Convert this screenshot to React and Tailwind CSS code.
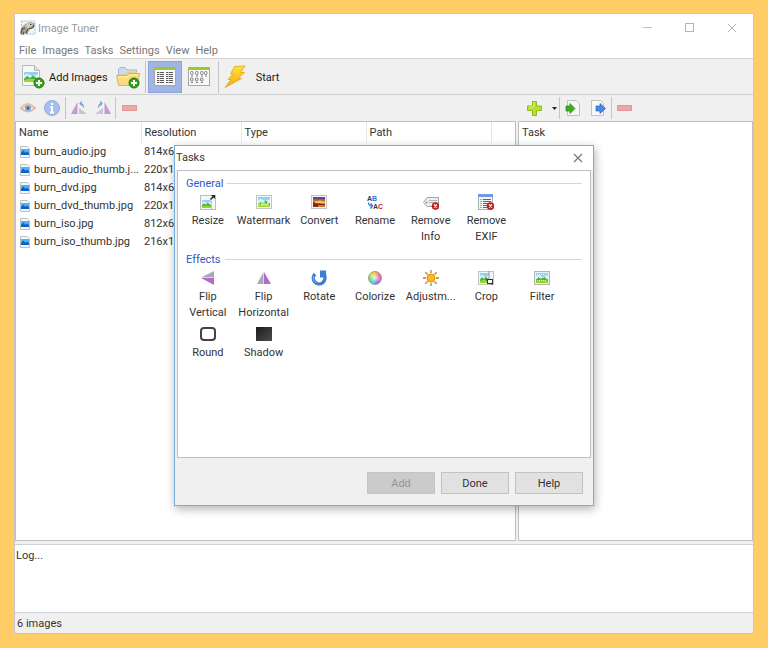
import { useState } from "react";

const files = [
  { name: "burn_audio.jpg", res: "814x61" },
  { name: "burn_audio_thumb.j...", res: "220x16" },
  { name: "burn_dvd.jpg", res: "814x61" },
  { name: "burn_dvd_thumb.jpg", res: "220x16" },
  { name: "burn_iso.jpg", res: "812x62" },
  { name: "burn_iso_thumb.jpg", res: "216x16" },
];

const groups = [
  {
    title: "General",
    items: [
      { label: "Resize", Icon: ResizeIcon },
      { label: "Watermark", Icon: WatermarkIcon },
      { label: "Convert", Icon: ConvertIcon },
      { label: "Rename", Icon: RenameIcon },
      { label: "Remove Info", Icon: RemoveInfoIcon },
      { label: "Remove EXIF", Icon: RemoveExifIcon },
    ],
  },
  {
    title: "Effects",
    items: [
      { label: "Flip Vertical", Icon: FlipVerticalIcon },
      { label: "Flip Horizontal", Icon: FlipHorizontalIcon },
      { label: "Rotate", Icon: RotateIcon },
      { label: "Colorize", Icon: ColorizeIcon },
      { label: "Adjustm...", Icon: SunIcon },
      { label: "Crop", Icon: CropIcon },
      { label: "Filter", Icon: FilterIcon },
      { label: "Round", Icon: RoundIcon },
      { label: "Shadow", Icon: ShadowIcon },
    ],
  },
];

function Svg({ size = 16, children }) {
  return (
    <svg width={size} height={size} viewBox={`0 0 ${size} ${size}`} fill="none" className="block shrink-0">
      {children}
    </svg>
  );
}

/* ---------- shared icon parts ---------- */

function Landscape({ x, y, w, h }) {
  return (
    <svg x={x} y={y} width={w} height={h} viewBox="0 0 14 10" preserveAspectRatio="none">
      <rect width="14" height="10" fill="#8ed3f0" />
      <path d="M0 3Q3 1 6 3T14 2V6H0z" fill="#d5f2fb" />
      <path d="M0 7L3 4L6 6L9 3.500L14 7V10H0z" fill="#4fab3a" />
      <path d="M0 8Q7 5.500 14 8V10H0z" fill="#9bd430" />
    </svg>
  );
}

function PlusBadge({ cx, cy, r = 5 }) {
  return (
    <g>
      <circle cx={cx} cy={cy} r={r} fill="#36a11d" stroke="#1d7a12" />
      <path d={`M${cx - 3} ${cy}H${cx + 3}M${cx} ${cy - 3}V${cy + 3}`} stroke="#fff" strokeWidth="2" />
    </g>
  );
}

function CrossBadge() {
  return (
    <g>
      <circle cx="12.500" cy="12" r="3.500" fill="#c81e1e" stroke="#a31414" strokeWidth=".6" />
      <path d="M11 10.500L14 13.500M14 10.500L11 13.500" stroke="#fff" strokeWidth="1.200" />
    </g>
  );
}

/* ---------- main toolbar ---------- */

function AppIcon() {
  return (
    <Svg>
      <rect x="1.500" y="1" width="13.500" height="13" fill="#f0f7fc" stroke="#8cc3e6" strokeDasharray="2 1" />
      <path d="M0 13L1 8L4 5L7 3L10 2L14 3L15 5L13 8L10 9L8 12L8 14H5L5 12L3 15H1z" fill="#aaa292" />
      <path d="M5 6L8 3L13 3.500L12 6L8 8z" fill="#d3cdc0" />
      <path d="M1 13L2.500 9L5 8M8 9L6 13M9 9L13 7.500L14 5M3 14.500L4 12" stroke="#514b43" strokeWidth="1.100" />
      <path d="M10 4.500H11.500" stroke="#3a3530" />
    </Svg>
  );
}

function AddImageIcon() {
  return (
    <Svg size={24}>
      <path d="M.5 .5H12.500L17.500 5.500V20.500H.5z" fill="#f8f8f8" stroke="#b9b9b9" />
      <path d="M12.500 .5V5.500H17.500" fill="#ddd" stroke="#b9b9b9" />
      <Landscape x={2} y={7} w={14} h={10} />
      <PlusBadge cx={17} cy={18} />
    </Svg>
  );
}

function AddFolderIcon() {
  return (
    <Svg size={24}>
      <path d="M2.500 4.500L4 2.500H9L11 5H20.500V18H2.500z" fill="#c6dcf2" stroke="#9dbbd9" />
      <path d="M3 9H10L12 7H21V20H3z" fill="#eecb78" />
      <path d="M.5 10.500H11L13 8.500H23.500L21.500 20.500H2.500z" fill="#fbd97d" stroke="#dfb45c" />
      <path d="M2 12H12L14 10H22" stroke="#fff0b8" />
      <PlusBadge cx={18} cy={18} />
    </Svg>
  );
}

function DetailsIcon() {
  return (
    <Svg size={22}>
      <rect x=".5" y="2.500" width="21" height="17" fill="#fafafa" stroke="#a6a6a6" />
      <rect x="0" y="1" width="22" height="3" fill="#97cc2c" />
      <path d="M3 6.500H10M3 8.500H10M3 10.500H10M3 12.500H10M3 14.500H10M3 16.500H10M12 6.500H19M12 8.500H19M12 10.500H19M12 12.500H19M12 14.500H19M12 16.500H19" stroke="#585858" strokeWidth="1.200" />
      <path d="M5.500 5V18M14.500 5V18" stroke="#fafafa" strokeWidth=".6" />
    </Svg>
  );
}

function ThumbsIcon() {
  return (
    <Svg size={22}>
      <rect x=".5" y="2.500" width="21" height="17" fill="#fafafa" stroke="#a6a6a6" />
      <rect x="0" y="1" width="22" height="3" fill="#97cc2c" />
      {[4, 9, 14, 18].map((x) => (
        <g key={x} stroke="#7a7a7a">
          <rect x={x - 1.5} y="5.500" width="2.500" height="3" rx="1" />
          <path d={`M${x - 1} 10H${x + 1}`} />
        </g>
      ))}
      {[4, 9, 14].map((x) => (
        <g key={x} stroke="#7a7a7a">
          <rect x={x - 1.5} y="12" width="2.500" height="3" rx="1" />
          <path d={`M${x - 1} 16.500H${x + 1}`} />
        </g>
      ))}
    </Svg>
  );
}

function BoltIcon() {
  return (
    <Svg size={24}>
      <defs>
        <linearGradient id="bolt" x1="0" y1="0" x2="0" y2="1">
          <stop offset="0" stopColor="#ffe23a" />
          <stop offset="1" stopColor="#f9a80c" />
        </linearGradient>
      </defs>
      <path
        d="M10.500 1.500L21 1L16.500 7.500H20.500L14 13.500H17.500L1 22.500L7 14.500H4L9 9H6.500z"
        fill="url(#bolt)"
        stroke="#dfa52a"
        strokeWidth=".8"
        strokeLinejoin="round"
      />
    </Svg>
  );
}

/* ---------- small toolbars ---------- */

function EyeIcon() {
  return (
    <Svg>
      <path d="M0 8Q7 -1 16 8Q8 16 0 8z" fill="#f1d3bd" stroke="#d9b498" strokeWidth=".8" />
      <path d="M1.500 8.500Q8 4 14.500 8.500Q8 13 1.500 8.500z" fill="#fff" stroke="#b79a88" strokeWidth=".7" />
      <circle cx="8" cy="8" r="3.200" fill="#8fb0d6" />
      <circle cx="8" cy="8" r="1.500" fill="#4d5f7a" />
    </Svg>
  );
}

function InfoIcon() {
  return (
    <Svg>
      <circle cx="8" cy="8" r="7.500" fill="#a5c0ec" stroke="#8facdf" />
      <path d="M8 3V5M6.500 7H8V12M6 12.500H10" stroke="#fff" strokeWidth="2" />
    </Svg>
  );
}

function RotateLeftIcon() {
  return (
    <Svg>
      <path d="M6.500 2V14H0z" fill="#c698d6" />
      <path d="M8 8L16 14H8z" fill="#c6c6cc" />
      <path d="M12.500 7.500Q12.500 3.500 9 3.500M11 1.500L9 3.500L11 5.500" stroke="#7f9fcf" strokeWidth="1.200" />
    </Svg>
  );
}

function RotateRightIcon() {
  return (
    <Svg>
      <path d="M9.500 2V14H16z" fill="#c698d6" />
      <path d="M8 8L0 14H8z" fill="#c6c6cc" />
      <path d="M3.500 7.500Q3.500 3.500 7 3.500M5 1.500L7 3.500L5 5.500" stroke="#7f9fcf" strokeWidth="1.200" />
    </Svg>
  );
}

function MinusIcon() {
  return (
    <Svg>
      <rect x=".5" y="5.500" width="14" height="5" fill="#e9a8a4" stroke="#df9b97" />
    </Svg>
  );
}

function PlusIcon() {
  return (
    <Svg>
      <path d="M5.500 1.500H9.500V6H14.500V10.500H9.500V15.500H5.500V10.500H.5V6H5.500z" fill="#b9e02a" stroke="#8fba2c" />
      <path d="M6.500 3V7H2" stroke="#dcf37f" />
    </Svg>
  );
}

function ImportIcon() {
  return (
    <Svg>
      <path d="M2.500 .5H11.500L14.500 3.500V15.500H2.500z" fill="#f7f7f7" stroke="#c2c2c2" />
      <path d="M1 6H5V3.500L10 8.500L5 13.500V11H1z" fill="#43ad1f" stroke="#2b8512" strokeWidth=".7" />
    </Svg>
  );
}

function ExportIcon() {
  return (
    <Svg>
      <path d="M1.500 .5H10.500L13.500 3.500V15.500H1.500z" fill="#f7f7f7" stroke="#c2c2c2" />
      <path d="M6 6H10V3.500L15.500 8.500L10 13.500V11H6z" fill="#4c86ea" stroke="#2c5fc4" strokeWidth=".7" />
    </Svg>
  );
}

function FileIcon() {
  return (
    <Svg size={12}>
      <path d="M1.500 .5H8.500L10.500 2.500V11.500H1.500z" fill="#f4f8fc" stroke="#b4c0cc" />
      <rect x="2" y="3" width="8" height="6" fill="#55b0f0" />
      <path d="M2 9V7L4.500 4.500L6.500 7L8 5.500L10 7.500V9z" fill="#0a63c2" />
    </Svg>
  );
}

/* ---------- task icons ---------- */

function ResizeIcon() {
  return (
    <Svg>
      <rect x=".5" y="1.500" width="15" height="14" fill="#f5f5f5" stroke="#bdbdbd" />
      <Landscape x={2} y={6} w={9} h={8} />
      <path d="M11.500 7V15" stroke="#c8c8c8" />
      <path d="M10.500 5.500L13.500 2.500" stroke="#222" strokeWidth="1.500" />
      <path d="M11 1H15V5z" fill="#222" />
    </Svg>
  );
}

function WatermarkIcon() {
  return (
    <Svg>
      <rect x=".5" y="1.500" width="15" height="13" fill="#f5f5f5" stroke="#c4c4c4" />
      <Landscape x={2} y={3} w={12} h={10} />
      <path d="M3 12V9L5 7L6 12M7 12V9H9V12M10 12L12 8V12" stroke="#e6f79b" />
    </Svg>
  );
}

function ConvertIcon() {
  return (
    <Svg>
      <rect x=".5" y="1.500" width="15" height="13" fill="#f5f5f5" stroke="#c4c4c4" />
      <rect x="2" y="3" width="12" height="10" fill="#e2752b" />
      <rect x="2" y="3" width="12" height="2" fill="#4b5488" />
      <path d="M2 5H14V6.500H2z" fill="#b4534a" />
      <path d="M4 7.500L9 6.500L14 8V9.500H4z" fill="#fbc34e" />
      <path d="M2 8L4 9L14 10V11H8V13H2z" fill="#7a2f1a" />
      <path d="M7 11H14V13H7z" fill="#d9702a" />
    </Svg>
  );
}

function RenameIcon() {
  return (
    <Svg>
      <g fontFamily="Liberation Sans, sans-serif" fontSize="7" fontWeight="bold">
        <text x="0" y="7" fill="#2a3a5c">A</text>
        <text x="5" y="7" fill="#2f72d0">B</text>
        <text x="6" y="15" fill="#2a3a5c">A</text>
        <text x="11" y="15" fill="#d02525">C</text>
      </g>
      <path d="M1.500 8.500Q1.500 12 5 12M3.500 9.500L5.500 12L3.500 14.500" stroke="#3c7bcf" strokeWidth="1.300" />
    </Svg>
  );
}

function RemoveInfoIcon() {
  return (
    <Svg>
      <path d="M.5 8.500L4 3.500H15.500V12.500H4z" fill="#eee" stroke="#a5a5a5" />
      <path d="M6 6.500H14M6 8.500H11" stroke="#b5b5b5" />
      <circle cx="3.500" cy="8.500" r="1" fill="#888" />
      <CrossBadge />
    </Svg>
  );
}

function RemoveExifIcon() {
  return (
    <Svg>
      <rect x=".5" y="1.500" width="14" height="14" fill="#f5f5f5" stroke="#a9adb5" />
      <rect x="0" y="0" width="15" height="3" fill="#7398e2" />
      <path d="M5 5.500H13M5 7.500H13M5 9.500H13M5 11.500H13M5 13.500H10" stroke="#666" />
      <path d="M2 5.500H4M2 7.500H4M2 9.500H4M2 11.500H4M2 13.500H4" stroke="#aaa" />
      <CrossBadge />
    </Svg>
  );
}

function FlipVerticalIcon() {
  return (
    <Svg>
      <path d="M1 7.500L14 1V7.500z" fill="#a9aab5" />
      <path d="M1 8L14 15V8z" fill="#b568cf" />
    </Svg>
  );
}

function FlipHorizontalIcon() {
  return (
    <Svg>
      <path d="M7.500 2L1 14H7.500z" fill="#a9aab5" />
      <path d="M8 2L15 14H8z" fill="#b568cf" />
    </Svg>
  );
}

function RotateIcon() {
  return (
    <Svg>
      <path d="M4 4A5.800 5.800 0 1 0 13 5" stroke="#3f7cd6" strokeWidth="3.400" />
      <path d="M9 .5H15V3L15.500 7.500H9z" fill="#3f7cd6" />
      <path d="M2.500 6A6 6 0 0 0 5 13" stroke="#7fb0ef" />
    </Svg>
  );
}

function ColorizeIcon() {
  return (
    <span className="block size-4 p-px">
      <span className="block size-full rounded-full border border-[#9a9a9a] bg-[radial-gradient(circle,#ffffffcc_0%,#ffffff00_65%),conic-gradient(#f6c04a,#f36a6a,#e45bd8,#6a7bf2,#4fc8e8,#5fdc6a,#c9e84a,#f6c04a)]" />
    </span>
  );
}

function SunIcon() {
  return (
    <Svg>
      <path
        d="M8 0V3M8 13V16M0 8H3M13 8H16M2.300 2.300L4.500 4.500M11.500 11.500L13.700 13.700M2.300 13.700L4.500 11.500M11.500 4.500L13.700 2.300"
        stroke="#b8842a"
        strokeWidth="1.300"
      />
      <circle cx="8" cy="8" r="4" fill="#fdbb1f" stroke="#e08e0b" />
    </Svg>
  );
}

function CropIcon() {
  return (
    <Svg>
      <rect x=".5" y="1.500" width="15" height="13" fill="#f5f5f5" stroke="#c4c4c4" />
      <Landscape x={2} y={3} w={9} h={10} />
      <path d="M11 1V9" stroke="#999" />
      <rect x="9.500" y="9.500" width="5" height="4" fill="#fff" stroke="#333" />
      <path d="M8 10H10M14 13V15" stroke="#333" />
    </Svg>
  );
}

function FilterIcon() {
  return (
    <Svg>
      <rect x=".5" y="1.500" width="15" height="13" fill="#eee" stroke="#b4b4b4" />
      <Landscape x={2} y={3} w={12} h={10} />
      <path d="M3 4.500H13M3 7.500H13M3 10.500H13" stroke="#fff" strokeOpacity=".7" strokeDasharray="1 1" />
    </Svg>
  );
}

function RoundIcon() {
  return (
    <Svg>
      <rect x="1" y="2" width="14" height="12" rx="3" fill="#fff" stroke="#444" strokeWidth="2" />
    </Svg>
  );
}

function ShadowIcon() {
  return (
    <Svg>
      <defs>
        <linearGradient id="shadow" x1="0" y1="0" x2="1" y2="1">
          <stop offset="0" stopColor="#1c1c1c" />
          <stop offset="1" stopColor="#4c4c4c" />
        </linearGradient>
      </defs>
      <rect x="0" y="1" width="16" height="14" fill="url(#shadow)" />
    </Svg>
  );
}

/* ---------- layout ---------- */

function Separator() {
  return <span className="w-px self-stretch bg-[#c4c4c4]" />;
}

function IconButton({ label, children }) {
  return (
    <button type="button" aria-label={label} className="shrink-0">
      {children}
    </button>
  );
}

function TitleBar() {
  return (
    <header className="flex h-7 items-center bg-white pr-4 pl-[5px] text-[#9a9a9a]">
      <AppIcon />
      <h1 className="ml-0.5 flex-1 pt-0.5">Image Tuner</h1>
      <div className="flex gap-8">
        <IconButton label="Minimize">
          <Svg size={10}><path d="M0 4.500H9" stroke="#c0c0c0" /></Svg>
        </IconButton>
        <IconButton label="Maximize">
          <Svg size={10}><rect x=".5" y=".5" width="8" height="8" stroke="#b5b5b5" /></Svg>
        </IconButton>
        <IconButton label="Close">
          <Svg size={10}><path d="M1 1L9 9M9 1L1 9" stroke="#b5b5b5" /></Svg>
        </IconButton>
      </div>
    </header>
  );
}

function MenuBar() {
  return (
    <nav className="flex h-[17px] items-center gap-1.5 border-b border-[#d4d4d4] bg-white pt-px pl-1 text-[#777]">
      {["File", "Images", "Tasks", "Settings", "View", "Help"].map((m) => (
        <button key={m} type="button">{m}</button>
      ))}
    </nav>
  );
}

function Toolbar() {
  const [view, setView] = useState("details");
  const viewClass = (v) =>
    `flex w-[34px] items-center justify-center self-stretch border ${
      view === v ? "border-[#8ba5dc] bg-[#9fb4e3]" : "border-transparent"
    }`;

  return (
    <div className="flex h-9 items-center border-b border-[#cfcfcf] pt-0.5 pb-px pl-[7px]">
      <button type="button" className="flex items-center gap-[3px] text-[#1a1a1a]">
        <AddImageIcon />
        <span className="pt-px">Add Images</span>
      </button>
      <div className="ml-2 flex items-center gap-[5px] self-stretch">
        <IconButton label="Add folder"><AddFolderIcon /></IconButton>
        <Separator />
      </div>
      <div className="mx-0.5 flex self-stretch">
        <button type="button" aria-label="Details view" onClick={() => setView("details")} className={viewClass("details")}>
          <DetailsIcon />
        </button>
        <button type="button" aria-label="Thumbnail view" onClick={() => setView("thumbs")} className={viewClass("thumbs")}>
          <ThumbsIcon />
        </button>
      </div>
      <Separator />
      <button type="button" className="ml-[5px] flex items-center gap-2 text-[#1a1a1a]">
        <BoltIcon />
        <span className="pt-px">Start</span>
      </button>
    </div>
  );
}

function FileToolbar() {
  return (
    <div className="flex items-center gap-2 py-0.5 pl-[5px]">
      <IconButton label="Preview"><EyeIcon /></IconButton>
      <div className="flex items-center gap-[5px] self-stretch">
        <IconButton label="Image info"><InfoIcon /></IconButton>
        <Separator />
        <IconButton label="Rotate left"><RotateLeftIcon /></IconButton>
      </div>
      <IconButton label="Rotate right"><RotateRightIcon /></IconButton>
      <div className="-ml-1 flex items-center gap-1.5 self-stretch">
        <Separator />
        <IconButton label="Remove image"><MinusIcon /></IconButton>
      </div>
    </div>
  );
}

function TaskToolbar() {
  return (
    <div className="flex items-center gap-[5px] py-0.5 pl-[9px]">
      <IconButton label="Add task"><PlusIcon /></IconButton>
      <div className="ml-1 flex items-center gap-0.5 self-stretch">
        <IconButton label="More tasks">
          <Svg size={5}><path d="M0 1H5L2.500 4z" fill="#222" /></Svg>
        </IconButton>
        <Separator />
      </div>
      <IconButton label="Load tasks"><ImportIcon /></IconButton>
      <div className="ml-1 flex items-center gap-[5px] self-stretch">
        <IconButton label="Save tasks"><ExportIcon /></IconButton>
        <Separator />
        <IconButton label="Remove task"><MinusIcon /></IconButton>
      </div>
    </div>
  );
}

function FileTable() {
  return (
    <table className="w-full table-fixed text-left">
      <thead>
        <tr className="h-[21px]">
          <th className="w-[125px] border-r border-[#e6e6e6] pl-[3px] font-normal">Name</th>
          <th className="w-[100px] border-r border-[#e6e6e6] pl-[3px] font-normal">Resolution</th>
          <th className="w-[125px] border-r border-[#e6e6e6] pl-[3px] font-normal">Type</th>
          <th className="w-[125px] border-r border-[#e6e6e6] pl-[3px] font-normal">Path</th>
          <th />
        </tr>
      </thead>
      <tbody>
        {files.map((f) => (
          <tr key={f.name} className="h-[18px]">
            <td className="pl-[3px]">
              <div className="flex items-center gap-[3px] whitespace-nowrap">
                <FileIcon />
                {f.name}
              </div>
            </td>
            <td className="pl-[3px]">{f.res}</td>
          </tr>
        ))}
      </tbody>
    </table>
  );
}

function TaskGroup({ title, items }) {
  return (
    <section className="mb-1.5">
      <div className="mb-[3px] flex h-4 items-center gap-1 pr-2 pl-2">
        <h3 className="pt-0.5 text-[#3358c4]">{title}</h3>
        <span className="h-px flex-1 bg-[#ced6ea]" />
      </div>
      <div className="grid grid-cols-7 gap-y-[5px] pr-5 pl-0.5">
        {items.map(({ label, Icon }) => (
          <button key={label} type="button" className="flex flex-col items-center gap-[3px] leading-4">
            <Icon />
            {label}
          </button>
        ))}
      </div>
    </section>
  );
}

function TasksDialog() {
  const btn = "h-[22px] w-[68px] border pt-px";

  return (
    <div
      role="dialog"
      aria-label="Tasks"
      className="absolute top-[145px] left-1/2 w-[420px] -translate-x-1/2 border border-[#74aede] bg-[#f0f0f0] shadow-[1px_3px_9px_rgba(0,0,0,0.3)]"
    >
      <div className="flex h-6 items-center justify-between bg-white pr-2.5 pl-px">
        <h2>Tasks</h2>
        <IconButton label="Close dialog">
          <Svg size={10}><path d="M1 1L9 9M9 1L1 9" stroke="#777" strokeWidth="1.200" /></Svg>
        </IconButton>
      </div>
      <div className="mx-0.5 h-[288px] border border-[#bcbfc6] bg-white pt-1">
        {groups.map((g) => (
          <TaskGroup key={g.title} {...g} />
        ))}
      </div>
      <div className="flex justify-end gap-1.5 pt-3.5 pr-2.5 pb-[11px]">
        <button type="button" disabled className={`${btn} border-[#c4c4c4] bg-[#cbcbcb] text-[#949494]`}>Add</button>
        <button type="button" className={`${btn} border-[#c2c2c2] bg-[#e1e1e1]`}>Done</button>
        <button type="button" className={`${btn} border-[#c2c2c2] bg-[#e1e1e1]`}>Help</button>
      </div>
    </div>
  );
}

export default function App() {
  return (
    <div className="relative flex h-screen bg-[#ffcc66] px-3.5 pt-[13px] pb-3.5 font-[Roboto,sans-serif] text-[11px] leading-4 text-[#333]">
      <div className="flex min-w-0 flex-1 flex-col border border-[#c3c8d0] bg-[#f0f0f0]">
        <TitleBar />
        <MenuBar />
        <Toolbar />

        <div className="grid h-[26px] grid-cols-[1fr_235px] gap-0.5">
          <FileToolbar />
          <TaskToolbar />
        </div>

        <main className="grid min-h-0 flex-1 grid-cols-[1fr_235px] gap-0.5">
          <section className="overflow-hidden border border-[#bcbfc6] bg-white">
            <FileTable />
          </section>
          <section className="border border-[#bcbfc6] bg-white">
            <div className="pt-[3px] pl-[3px]">Task</div>
          </section>
        </main>

        <section className="mt-[3px] h-[69px] border-y border-[#cfd1d6] bg-white pt-[3px] pl-px">Log...</section>
        <footer className="h-5 pt-[3px] pl-0.5">6 images</footer>
      </div>

      <TasksDialog />
    </div>
  );
}
